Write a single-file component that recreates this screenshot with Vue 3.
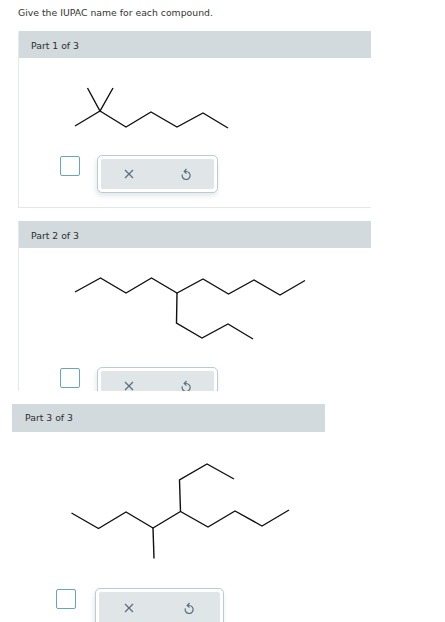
<script setup>
const parts = [
  {
    id: 'one', label: 'Part 1 of 3', x: 18, y: 58, w: 353, h: 97,
    lines: [
      '75,126 100,111 126,127 151,112 177,127 203,113 228,128',
      '87.5,88 100,111 113,88'
    ]
  },
  {
    id: 'two', label: 'Part 2 of 3', x: 18, y: 249, w: 353, h: 119,
    lines: [
      '75,293 100.5,279 126,294 151.5,279 177,294 203,280 228.5,295 254,281 280,296 305,281.5',
      '177,294 176.5,324 202,339 228,325 253,340'
    ]
  },
  {
    id: 'three', label: 'Part 3 of 3', x: 12, y: 432, w: 313, h: 156,
    lines: [
      '71.5,513 98.5,528.5 126,512 153,528 180.5,511.5 208,527 235,511 262,526 289,510',
      '153,528 154,558.5',
      '180.5,511.5 179.5,480 207,464 234,479'
    ]
  }
]
</script>

<template>
  <main class="page">
    <p class="intro">Give the IUPAC name for each compound.</p>
    <section v-for="part in parts" :key="part.id" class="part" :class="part.id">
      <header class="part-head">{{ part.label }}</header>
      <svg
        class="molecule"
        :width="part.w"
        :height="part.h"
        :viewBox="`${part.x} ${part.y} ${part.w} ${part.h}`"
      >
        <polyline v-for="(pts, i) in part.lines" :key="i" :points="pts" />
      </svg>
      <div class="answer">
        <span class="field"></span>
        <div class="tools">
          <div class="tools-inner">
            <svg class="icon" viewBox="0 0 12 12" width="12" height="12">
              <path d="M2 2 L10 10 M10 2 L2 10" />
            </svg>
            <svg class="icon undo" viewBox="0 0 12 14" width="12" height="14">
              <path d="M2.3 7.4 A4 4 0 1 0 6.2 4.5 L4.2 4.5 M6.5 2 L4.2 4.5 L6.5 6.6" />
            </svg>
          </div>
        </div>
      </div>
    </section>
  </main>
</template>

<style scoped>
.page {
  width: 445px;
  height: 622px;
  overflow: hidden;
  background: #fff;
  color: #333;
  font-family: "DejaVu Sans", Verdana, sans-serif;
  font-size: 9.3px;
}
.intro {
  margin: 0;
  padding: 6px 0 0 18px;
  height: 31px;
  box-sizing: border-box;
  line-height: 13px;
}
.part {
  box-sizing: border-box;
  width: 353px;
  margin-left: 18px;
  border-left: 1px solid #e4e8ea;
}
.one {
  height: 177px;
  border-bottom: 1px solid #e4e8ea;
  border-top-left-radius: 3px;
}
.two {
  height: 170px;
  margin-top: 13px;
  overflow: hidden;
}
.three {
  width: 313px;
  margin-left: 12px;
  margin-top: 13px;
  border-left: 0;
}
.part-head {
  height: 27px;
  line-height: 29px;
  padding-left: 12px;
  background: #d2dadd;
  color: #2e2e2e;
}
.three .part-head {
  height: 28px;
  padding-left: 13px;
  line-height: 28px;
}
.molecule {
  display: block;
  margin-left: -1px;
}
.three .molecule {
  margin-left: 0;
}
.molecule polyline {
  fill: none;
  stroke: #111;
  stroke-width: 1.4;
  stroke-linejoin: miter;
}
.answer {
  display: flex;
  align-items: flex-start;
  gap: 17px;
  padding-left: 41px;
}
.three .answer {
  gap: 19px;
  padding-left: 44px;
}
.field {
  box-sizing: border-box;
  flex: none;
  width: 20px;
  height: 20px;
  margin-top: 1px;
  background: #fff;
  border: 1px solid #69a5b4;
  border-radius: 2px;
}
.tools {
  box-sizing: border-box;
  flex: none;
  width: 121px;
  height: 38px;
  padding: 3px;
  background: #fff;
  border: 1px solid #b9ccd3;
  border-radius: 5px;
  box-shadow: -1px 3px 5px rgba(90, 110, 120, 0.16);
}
.three .tools {
  width: 129px;
  height: 60px;
}
.tools-inner {
  display: flex;
  align-items: flex-start;
  gap: 45px;
  height: 100%;
  padding: 9px 0 0 22px;
  box-sizing: border-box;
  background: #e0e6e8;
  border-radius: 2px;
}
.three .tools-inner {
  gap: 48px;
  padding: 10px 0 0 24px;
}
.icon {
  flex: none;
  fill: none;
  stroke: #566f7c;
  stroke-width: 1.2;
}
.undo {
  margin-top: -1px;
}
</style>
